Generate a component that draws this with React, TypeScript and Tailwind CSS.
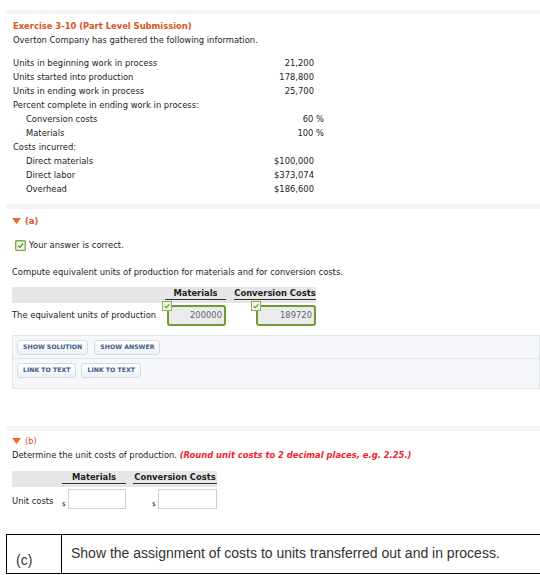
import React from "react";

const Check = ({ size = 11 }: { size?: number }) => (
  <svg width={size} height={size} viewBox="0 0 12 12">
    <rect x="0.75" y="0.75" width="10.5" height="10.5" rx="1" fill="#f3f8ec" stroke="#7fa84a" strokeWidth="1.5" />
    <path d="M3.2 6.2 L5.1 8 L8.8 3.8" fill="none" stroke="#4f8a1e" strokeWidth="1.3" />
  </svg>
);

const Badge = () => (
  <svg width="10" height="10" viewBox="0 0 10 10">
    <rect x="0.5" y="0.5" width="9" height="9" fill="#eef5e2" stroke="#8db05a" strokeWidth="1" />
    <path d="M2.6 5.2 L4.2 6.7 L7.4 3.3" fill="none" stroke="#5a9a22" strokeWidth="1.1" />
  </svg>
);

const Tri = () => (
  <svg width="9" height="6" viewBox="0 0 9 6" className="mr-[4px]">
    <path d="M0 0 L9 0 L4.5 6 Z" fill="#f26a1b" />
  </svg>
);

function Row({ label, value, indent, pct }: { label: string; value: string; indent?: boolean; pct?: boolean }) {
  return (
    <div className={pct ? "flex h-[14px] items-center w-[311px]" : "flex h-[14px] items-center w-[301px]"}>
      <div className={indent ? "flex-1 pl-[13px]" : "flex-1"}>{label}</div>
      <div className="text-right">{value}</div>
    </div>
  );
}

function Btn({ children }: { children: React.ReactNode }) {
  return (
    <div className="h-[15px] px-[5px] flex items-center rounded-[3px] border border-[#d3d9e1] bg-gradient-to-b from-white to-[#eef1f5] text-[6.2px] font-bold text-[#3d5c8c] whitespace-nowrap">
      {children}
    </div>
  );
}

export default function App() {
  return (
    <div className="w-[540px] h-[575px] bg-white overflow-hidden text-[8.4px] text-[#222] font-['DejaVu_Sans','Verdana',sans-serif] whitespace-nowrap">
      <div className="pt-[10px] pl-[6px]">
        <div className="h-[4px] bg-[#f3f6f9]" />
      </div>
      <div className="pl-[13px]">
        <div className="mt-[5px] h-[14px] flex items-center font-bold text-[#d9541e]">Exercise 3-10 (Part Level Submission)</div>
        <div className="h-[14px] flex items-center">Overton Company has gathered the following information.</div>
        <div className="mt-[9px]">
          <Row label="Units in beginning work in process" value="21,200" />
          <Row label="Units started into production" value="178,800" />
          <Row label="Units in ending work in process" value="25,700" />
          <Row label="Percent complete in ending work in process:" value="" />
          <Row label="Conversion costs" value="60 %" indent pct />
          <Row label="Materials" value="100 %" indent pct />
          <Row label="Costs incurred:" value="" />
          <Row label="Direct materials" value="$100,000" indent />
          <Row label="Direct labor" value="$373,074" indent />
          <Row label="Overhead" value="$186,600" indent />
        </div>
      </div>
      <div className="pl-[6px] mt-[8px]">
        <div className="h-[5px] bg-[#f3f6f9]" />
      </div>
      <div className="pl-[12px]">
        <div className="mt-[5px] h-[14px] flex items-center font-bold text-[#d9541e]">
          <Tri />(a)
        </div>
        <div className="mt-[10px] h-[14px] flex items-center pl-[3px]">
          <Check />
          <span className="ml-[3px]">Your answer is correct.</span>
        </div>
        <div className="mt-[13px] h-[14px] flex items-center">Compute equivalent units of production for materials and for conversion costs.</div>
        <div className="mt-[8px] w-[304px] h-[16px] bg-[#e6e6e6] flex items-start font-bold">
          <div className="w-[153px] shrink-0" />
          <div className="w-[61px] shrink-0 h-[13px] border-b-[1.5px] border-[#333] flex items-center justify-center">Materials</div>
          <div className="w-[8px] shrink-0" />
          <div className="w-[82px] shrink-0 h-[13px] border-b-[1.5px] border-[#333] flex items-center justify-center">Conversion Costs</div>
        </div>
        <div className="flex items-center h-[23px] mt-[1px]">
          <div className="w-[155px]">The equivalent units of production</div>
          <div className="relative w-[59px] h-[21px] rounded-[3px] border-2 border-[#6f9a34] bg-[#ebebeb] flex items-center justify-end pr-[2px] text-[#666]">
            200000
            <div className="absolute left-[-7px] top-[-6px] flex"><Badge /></div>
          </div>
          <div className="w-[30px]" />
          <div className="relative w-[60px] h-[21px] rounded-[3px] border-2 border-[#6f9a34] bg-[#ebebeb] flex items-center justify-end pr-[2px] text-[#666]">
            189720
            <div className="absolute left-[-7px] top-[-6px] flex"><Badge /></div>
          </div>
        </div>
      </div>
      <div className="ml-[12px] mt-[8px] h-[54px] border border-[#dfe4ea] bg-[#f5f7fa] flex flex-col">
        <div className="h-[23px] flex items-center gap-[6px] pl-[4px] border-b border-[#dfe4ea]">
          <Btn>SHOW SOLUTION</Btn>
          <Btn>SHOW ANSWER</Btn>
        </div>
        <div className="h-[22px] flex items-center gap-[5px] pl-[4px]">
          <Btn>LINK TO TEXT</Btn>
          <Btn>LINK TO TEXT</Btn>
        </div>
      </div>
      <div className="pl-[6px] mt-[37px]">
        <div className="h-[5px] bg-[#f3f6f9]" />
      </div>
      <div className="pl-[12px]">
        <div className="mt-[3px] h-[14px] flex items-center text-[#d9541e]">
          <Tri />(b)
        </div>
        <div className="h-[15px] flex items-center">
          Determine the unit costs of production.&nbsp;
          <span className="font-bold italic text-[#f0242a]">(Round unit costs to 2 decimal places, e.g. 2.25.)</span>
        </div>
        <div className="mt-[8px] w-[205px] h-[16px] bg-[#e6e6e6] flex items-start font-bold">
          <div className="w-[50px] shrink-0" />
          <div className="w-[64px] shrink-0 h-[13px] border-b-[1.5px] border-[#333] flex items-center justify-center">Materials</div>
          <div className="w-[7px] shrink-0" />
          <div className="w-[84px] shrink-0 h-[13px] border-b-[1.5px] border-[#333] flex items-center justify-center">Conversion Costs</div>
        </div>
        <div className="flex h-[21px] mt-[2px] items-start">
          <div className="w-[50px] mt-[6px]">Unit costs</div>
          <div className="text-[6px] mt-[10px] w-[6px]">$</div>
          <div className="w-[58px] h-[20px] border border-[#cfcfcf] bg-white" />
          <div className="w-[26px]" />
          <div className="text-[6px] mt-[10px] w-[6px]">$</div>
          <div className="w-[59px] h-[20px] border border-[#cfcfcf] bg-white" />
        </div>
      </div>
      <div className="ml-[6px] mt-[24px] h-[40px] border-y-[1.5px] border-l-[1.5px] border-black flex font-['Liberation_Sans',Arial,sans-serif] text-[14px] text-[#333]">
        <div className="w-[55px] border-r-[1.5px] border-black pl-[9px] pt-[17px] leading-[16px]">(c)</div>
        <div className="pl-[9px] pt-[10px] leading-[16px]">Show the assignment of costs to units transferred out and in process.</div>
      </div>
    </div>
  );
}
